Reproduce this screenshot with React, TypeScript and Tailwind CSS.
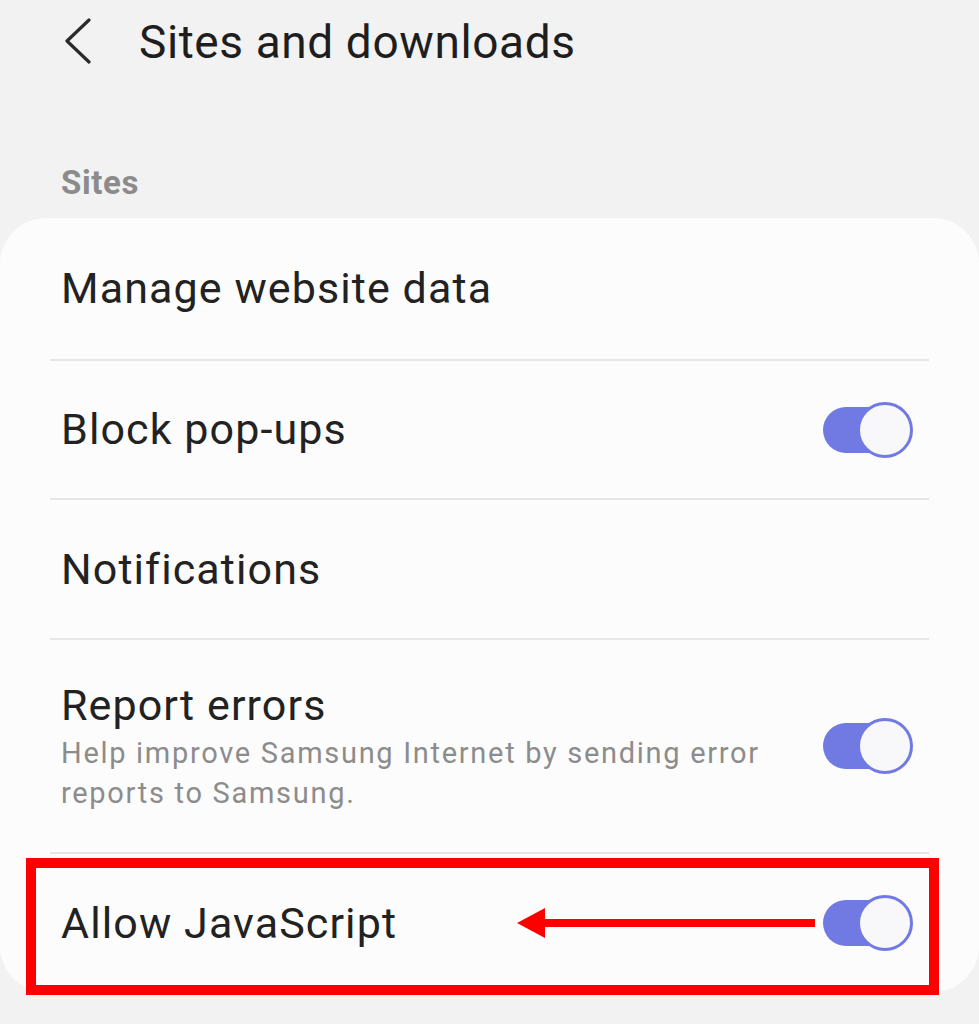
function Toggle() {
  return (
    <div className="relative w-[90px] h-[56px] flex items-center">
      <div className="h-[46px] w-[80px] rounded-full bg-[#7179e3]" />
      <div className="absolute right-0 top-0 h-[56px] w-[56px] rounded-full border-[3px] border-[#7179e3] bg-[#f8f8fa]" />
    </div>
  )
}

function Divider() {
  return <div className="h-[2px] bg-[#e6e6e6]" />
}

export default function App() {
  return (
    <div
      className="h-[1024px] w-[979px] overflow-hidden bg-[#f2f2f2] text-[#222222]"
      style={{ fontFamily: 'Roboto, "Noto Sans", sans-serif' }}
    >
      {/* Header */}
      <div className="flex items-center h-[84px]">
        <svg className="ml-[64px] mb-[2px]" width="28" height="46" viewBox="0 0 28 46" fill="none">
          <path d="M25 2 L3 23 L25 44" stroke="#2a2a2a" strokeWidth="3.2" strokeLinecap="round" strokeLinejoin="round" />
        </svg>
        <div className="ml-[47px] text-[46px] leading-none tracking-[0.6px] text-[#1e1e1e]">Sites and downloads</div>
      </div>

      {/* Section label */}
      <div className="pl-[61px] pt-[82px] pb-[18px] text-[33px] leading-[34px] font-bold tracking-[0.6px] text-[#8b8b8b]">Sites</div>

      {/* Card */}
      <div className="rounded-[46px] bg-[#fcfcfc] px-[50px]">
        <div className="h-[141px] flex items-center pl-[11px] text-[43px] tracking-[1.1px]">Manage website data</div>
        <Divider />
        <div className="h-[137px] flex items-center justify-between pl-[11px] pr-[16px]">
          <span className="text-[43px] tracking-[1.1px]">Block pop-ups</span>
          <Toggle />
        </div>
        <Divider />
        <div className="h-[138px] flex items-center pl-[11px] text-[43px] tracking-[1.1px]">Notifications</div>
        <Divider />
        <div className="h-[212px] flex items-center justify-between pl-[11px] pr-[16px]">
          <div className="flex flex-col">
            <span className="text-[43px] leading-[52px] tracking-[1.1px]">Report errors</span>
            <span className="mt-[2px] text-[29px] leading-[40px] text-[#8c8c8c] tracking-[1.7px]">
              Help improve Samsung Internet by sending error
              <br />
              reports to Samsung.
            </span>
          </div>
          <Toggle />
        </div>
        <Divider />
        <div className="relative h-[138px] flex items-center justify-between pl-[11px] pr-[16px]">
          <span className="text-[43px] tracking-[1.1px]">Allow JavaScript</span>
          <div className="flex items-center">
            <svg width="300" height="34" viewBox="0 0 300 34" className="mr-[6px]">
              <path d="M0 17 L28 2 L28 13 L298 13 L298 21 L28 21 L28 32 Z" fill="#ff0000" />
            </svg>
            <Toggle />
          </div>
          {/* red highlight box */}
          <div className="pointer-events-none absolute left-[-24px] right-[-10px] top-[4px] h-[137px] border-[10px] border-[#ff0000]" />
        </div>
      </div>
    </div>
  )
}
